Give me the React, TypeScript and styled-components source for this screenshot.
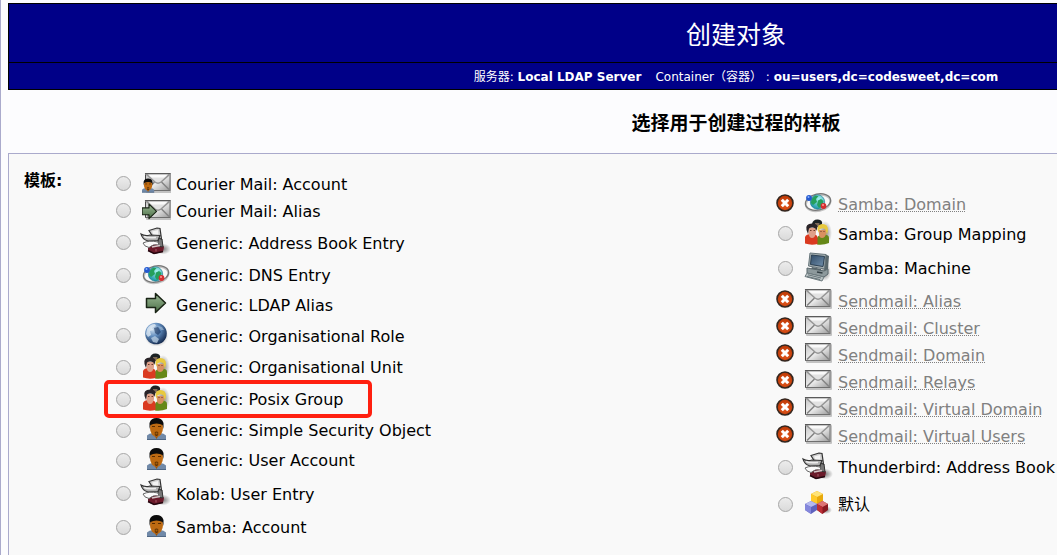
import React from "react";
import styled, { createGlobalStyle, css } from "styled-components";

const GlobalStyle = createGlobalStyle`
  body {
    margin: 0;
    background: #fcfcfe;
    color: #000;
    font-family: "DejaVu Sans", "Noto Sans CJK SC", sans-serif;
    font-size: 16px;
    overflow-x: hidden;
  }
`;

const Page = styled.div`
  box-sizing: border-box;
  min-height: 100vh;
  border-left: 1px solid #aaaacc;
  padding: 3px 0 0 7px;
  overflow: hidden;
`;

const Content = styled.main`
  display: flex;
  flex-direction: column;
  min-width: 1456px;
`;

const Banner = styled.header`
  background: #000088;
  border: 1px solid #000;
  color: #fff;
  text-align: center;
`;

const Title = styled.h1`
  margin: 0;
  padding: 14px 0 8px;
  border-bottom: 1px solid #000;
  font-size: 25px;
  font-weight: 400;
  line-height: 36px;
`;

const ServerLine = styled.p`
  display: flex;
  justify-content: center;
  gap: 14px;
  margin: 0;
  padding-top: 2px;
  font-size: 12px;
  line-height: 24px;
`;

const Subtitle = styled.h2`
  margin: 19px 0 16px;
  font-size: 19px;
  line-height: 28px;
  text-align: center;
`;

const Panel = styled.section`
  display: grid;
  grid-template-columns: 90px 1fr 1fr;
  align-items: center;
  box-sizing: border-box;
  min-height: calc(100vh - 153px);
  align-content: start;
  padding: 16px 25px 12px 15px;
  background: #f9f9f9;
  border: 1px solid #aaaacc;
  border-bottom: 0;
`;

const PanelLabel = styled.div`
  align-self: start;
  font-size: 16px;
  font-weight: 700;
  line-height: 22px;
`;

const TemplateList = styled.ul`
  margin: 0;
  padding: 0;
  list-style: none;
`;

const Row = styled.li<{ $height: number; $marked?: boolean }>`
  position: relative;
  display: flex;
  align-items: center;
  width: fit-content;
  height: ${(p) => p.$height}px;
  white-space: nowrap;
  ${(p) =>
    p.$marked &&
    css`
      &::after {
        content: "";
        position: absolute;
        inset: -3px -29px -3px -10px;
        border: 4px solid #ff2010;
        border-radius: 5px;
        pointer-events: none;
      }
    `}
`;

const Mark = styled.span`
  display: flex;
  align-items: center;
  justify-content: center;
  width: 18px;
  margin-right: 8px;
`;

const Radio = styled.input`
  appearance: none;
  box-sizing: border-box;
  width: 15px;
  height: 15px;
  margin: 0;
  border: 1px solid #a6a6a6;
  border-radius: 50%;
  background: linear-gradient(#ececec, #dadada);
  &:checked {
    background: radial-gradient(#555 30%, #e4e4e4 35%);
  }
`;

const StopMark = styled.svg`
  margin-bottom: 2px;
`;

const IconSlot = styled.span`
  display: flex;
  align-items: center;
  justify-content: center;
  width: 32px;
  margin-right: 4px;
  padding-bottom: 3px;
`;

const Name = styled.label`
  padding-top: 2px;
  line-height: 20px;
`;

const Unavailable = styled.abbr`
  padding-top: 3px;
  color: #808080;
  line-height: 20px;
  text-decoration: underline dotted 1px;
`;

type Kind = "mail" | "mailUser" | "mailAlias" | "book" | "dns" | "arrow" | "role" | "group" | "person" | "machine" | "blocks";

const rowHeight: Record<Kind, number> = {
  mail: 27,
  mailUser: 27,
  mailAlias: 27,
  book: 37,
  dns: 28,
  arrow: 31,
  role: 31,
  group: 32,
  person: 30,
  machine: 37,
  blocks: 37,
};

const Defs = () => (
  <svg width="0" height="0" style={{ display: "block" }} aria-hidden="true">
    <defs>
      <linearGradient id="paper" x1="0" y1="0" x2="1" y2="1">
        <stop offset="0" stopColor="#c4c4c4" />
        <stop offset=".5" stopColor="#ececec" />
        <stop offset="1" stopColor="#9a9a9a" />
      </linearGradient>
      <linearGradient id="leaf" x1="0" y1="0" x2="0" y2="1">
        <stop offset="0" stopColor="#9dba97" />
        <stop offset="1" stopColor="#4b6f47" />
      </linearGradient>
      <radialGradient id="globe" cx=".35" cy=".3" r=".75">
        <stop offset="0" stopColor="#cfe0f0" />
        <stop offset=".45" stopColor="#5f8bbd" />
        <stop offset="1" stopColor="#14294e" />
      </radialGradient>
      <radialGradient id="ocean" cx=".6" cy=".3" r=".7">
        <stop offset="0" stopColor="#a8f4f0" />
        <stop offset="1" stopColor="#1c94a6" />
      </radialGradient>
      <radialGradient id="shade">
        <stop offset="0" stopColor="#000" stopOpacity=".5" />
        <stop offset="1" stopColor="#000" stopOpacity="0" />
      </radialGradient>
      <radialGradient id="stop" cx=".5" cy=".6" r=".5">
        <stop offset="0" stopColor="#e65a20" />
        <stop offset="1" stopColor="#c03c08" />
      </radialGradient>
      <linearGradient id="screen" x1="0" y1="0" x2="1" y2="1">
        <stop offset="0" stopColor="#2f4a66" />
        <stop offset="1" stopColor="#7391ad" />
      </linearGradient>
    </defs>
  </svg>
);

const Envelope = () => (
  <g>
    <rect x="2" y="2" width="26" height="19" rx="1" fill="#000" opacity=".22" />
    <rect x="1.500" y="1.500" width="24.500" height="17" fill="url(#paper)" stroke="#6f6f6f" />
    <path d="M1 1.500H26.500M1.500 1V18" stroke="#484848" fill="none" />
    <path d="M3 17.500 10.500 10M25 17.500 17.500 10" stroke="#858585" strokeWidth="1.600" fill="none" />
    <path d="M2.500 2.500 11 10Q14 12.500 17 10L25.500 2.500Z" fill="#e2e2e2" stroke="#959595" strokeWidth="1.500" />
    <path d="M4 2.500H24L20 5.500H8Z" fill="#fafafa" />
  </g>
);

const Person = () => (
  <g>
    <path d="M0 22V17.500Q2 15 6 15H13Q17 15 19 17.500V22Z" fill="#7089a8" />
    <path d="M0 21.500H19" stroke="#4f6784" />
    <path d="M6 15 9.500 21 13 15Z" fill="#9a5208" />
    <ellipse cx="9.500" cy="10" rx="6.500" ry="8.800" fill="#bd6a12" />
    <path d="M2.500 11V5Q4 0 9.500 0T16.500 5V11L15.500 7Q13 5.500 9.500 5.500T3.500 7Z" fill="#0c0c0c" />
    <path d="M5 8.500H8M11 8.500H14" stroke="#5a2c00" strokeWidth="1.200" />
    <path d="M7.800 17V14Q9.500 12.800 11.200 14V17Q9.500 19 7.800 17Z" fill="#5c2f05" />
    <path d="M8.500 14.500H10.500V16.500H8.500Z" fill="#a4600e" />
  </g>
);

const Arrow = () => (
  <path
    d="M1.500 6.500H10.500V1.500L20.500 11 10.500 20.500V15.500H1.500Z"
    fill="url(#leaf)"
    stroke="#192415"
    strokeWidth="1.500"
    strokeLinejoin="round"
  />
);

const TemplateIcon = ({ kind }: { kind: Kind }) => {
  switch (kind) {
    case "mail":
      return (
        <svg width="28" height="21" viewBox="0 0 28 21">
          <Envelope />
        </svg>
      );
    case "mailUser":
      return (
        <svg width="29" height="21" viewBox="0 0 29 21">
          <g transform="translate(2 0)"><Envelope /></g>
          <g transform="translate(0 6.500) scale(.64)"><Person /></g>
        </svg>
      );
    case "mailAlias":
      return (
        <svg width="29" height="21" viewBox="0 0 29 21">
          <g transform="translate(2 0)"><Envelope /></g>
          <g transform="translate(-1 4) scale(.76)"><Arrow /></g>
        </svg>
      );
    case "book":
      return (
        <svg width="32" height="28" viewBox="0 0 32 28">
          <ellipse cx="23" cy="22" rx="8" ry="5.500" fill="url(#shade)" />
          <path d="M8 21 12 17 21 16 24 20 23 25 14 27 8 24Z" fill="#6b1a2a" />
          <path d="M8 23.500 14 26.500 23 24.500" stroke="#250810" strokeWidth="1.400" fill="none" />
          <path d="M18 10 22 12 23 20 18 19Z" fill="#777" stroke="#333" />
          <path d="M9 3.500 17 1 20 1.500 21.500 12 13 10Z" fill="#cfcfcf" stroke="#333" strokeWidth="1.200" />
          <path d="M12 4.500 18 3 18.500 8 14 9Z" fill="#f4f4f4" />
          <path d="M1 7Q5 9.500 10 8L20 8.500 18 13.500 8 14Q2 12 1 7Z" fill="#b0b0b0" stroke="#333" strokeWidth="1.200" />
          <path d="M4 9.500Q8 11.500 16 10.500" stroke="#ededed" strokeWidth="1.500" fill="none" />
          <path d="M3 16Q9 13 18 15L19 18Q13 16.500 9 20.500Q4 19.500 3 16Z" fill="#fafafa" stroke="#666" />
          <path d="M12 20 20 18.500" stroke="#d5c6c8" strokeWidth="1.300" />
          <path d="M16 22V24.500" stroke="#a65c68" />
        </svg>
      );
    case "dns":
      return (
        <svg width="28" height="22" viewBox="0 0 28 22">
          <g fill="none" transform="rotate(-12 14 11)">
            <ellipse cx="14" cy="12" rx="12.500" ry="8" stroke="#c2c2c2" strokeWidth="2" />
            <ellipse cx="14" cy="11" rx="12.800" ry="8" stroke="#777" strokeWidth="1.200" />
          </g>
          <circle cx="13.500" cy="11" r="7.200" fill="url(#ocean)" stroke="#147286" strokeWidth=".6" />
          <path d="M7.500 8 11 4.700 14.500 5 12 8 13 11 9 14 7 12ZM14 9.500 17 8 19.500 10 18 15 15 17 13 14Z" fill="#25a05c" />
          <circle cx="5" cy="7" r="2.900" fill="#2459ce" />
          <circle cx="4.500" cy="6" r="1" fill="#8db2ff" />
          <circle cx="19.500" cy="15" r="2.900" fill="#d52f31" />
          <circle cx="19" cy="14" r="1" fill="#ff9a94" />
        </svg>
      );
    case "arrow":
      return (
        <svg width="22" height="22" viewBox="0 0 22 22">
          <Arrow />
        </svg>
      );
    case "role":
      return (
        <svg width="24" height="24" viewBox="0 0 24 24">
          <ellipse cx="12.500" cy="14" rx="12" ry="11" fill="url(#shade)" />
          <circle cx="12" cy="11.500" r="10.800" fill="url(#globe)" />
          <path d="M3 7Q6 2 11 2L12 4 8 6 9 8 6 9 7 13 4 15 2 12Z" fill="#e4edf5" opacity=".75" />
          <path d="M14 4 18 5 20 8 17 8Z" fill="#b7cbe0" opacity=".5" />
          <path d="M7 16 11 14 15 17 13 21 9 20Z" fill="#bcd1e5" opacity=".75" />
          <path d="M10 6 14 5 17 10 14 13 11 11Z" fill="#15305c" opacity=".6" />
        </svg>
      );
    case "group":
      return (
        <svg width="28" height="26" viewBox="0 0 28 26">
          <ellipse cx="21" cy="14" rx="7" ry="12" fill="url(#shade)" />
          <path d="M8 5Q9 0 14 .500T18 5L16 8H10Z" fill="#1c2224" />
          <path d="M11 4H15.500L15 8H11Z" fill="#7d6958" />
          <path d="M13 25.500V19Q14 16 18 16 25 15 25 19V24Q19 26.500 13 25.500Z" fill="#668818" />
          <path d="M1 24.500V18Q2 15 7 15 13 15 13.500 18V25Q7 26.500 1 24.500Z" fill="#da3a20" />
          <path d="M15 11H22V15Q21 19 18 19T15 15Z" fill="#d99060" />
          <path d="M13.500 11Q13 5 18.500 5T24 11L23 16 21.500 10.500Q18 8 15 11L15 14Z" fill="#e8c93e" />
          <path d="M4.500 9H12V14Q11 19 8 19T4.500 14Z" fill="#dfa088" />
          <path d="M2.500 11Q1 4.500 8 4.500T13 10L12 12 11.500 9.500Q8 7.500 5 9.500L4 15Z" fill="#2a2428" />
          <path d="M6 11.500H7.500M9.500 11.500H11M16.500 12.500H17.500M19.500 12.500H20.500" stroke="#6a3826" />
        </svg>
      );
    case "person":
      return (
        <svg width="19" height="22" viewBox="0 0 19 22">
          <Person />
        </svg>
      );
    case "machine":
      return (
        <svg width="28" height="30" viewBox="0 0 28 30">
          <ellipse cx="21" cy="20" rx="6" ry="9" fill="url(#shade)" />
          <path d="M21 2 25 4 24 17 20 19Z" fill="#59676c" />
          <path d="M6 1 22 2.500 20.500 17 4.500 14Z" fill="#a6b0b2" stroke="#66747a" />
          <path d="M7.500 3 20.500 4.500 19 14.500 6.500 12.500Z" fill="url(#screen)" stroke="#2c4052" />
          <path d="M8 15 17 17V19L7 17Z" fill="#56646a" />
          <path d="M3 16 20 19 24 17V22L20 25 3 21Z" fill="#8d999c" stroke="#5a686d" />
          <path d="M13 20 18.500 21" stroke="#333f44" strokeWidth="1.300" />
          <path d="M3 21 20 25 18 29 1 24.500Z" fill="#b9c2c3" stroke="#6d7a7e" />
          <path d="M4 22.800 17 26M3 24.500 16 27.500" stroke="#68767b" fill="none" />
        </svg>
      );
    case "blocks":
      return (
        <svg width="28" height="25" viewBox="0 0 28 25">
          <ellipse cx="22" cy="20" rx="6" ry="4" fill="url(#shade)" />
          <path d="M7 4 13 1 19 4V11L13 14 7 11Z" fill="#e8a90c" />
          <path d="M7 4 13 1 19 4 13 7Z" fill="#ffe377" />
          <path d="M7 4 13 7V14L7 11Z" fill="#ffc928" />
          <path d="M1 14 7 11 13 14V20L7 24 1 20Z" fill="#5f62bd" />
          <path d="M1 14 7 11 13 14 7 17Z" fill="#b5b9ef" />
          <path d="M1 14 7 17V24L1 20Z" fill="#8487dc" />
          <path d="M13 14 18.500 11 24 14V20L18.500 24 13 20Z" fill="#8a1921" />
          <path d="M13 14 18.500 11 24 14 18.500 17Z" fill="#df7475" />
          <path d="M13 14 18.500 17V24L13 20Z" fill="#bd2f36" />
        </svg>
      );
  }
};

const StopIcon = () => (
  <StopMark width="18" height="18" viewBox="0 0 18 18">
    <circle cx="9" cy="9" r="8" fill="url(#stop)" stroke="#33261f" strokeWidth="1.600" />
    <path d="M5.800 5.800 12.200 12.200M12.200 5.800 5.800 12.200" stroke="#fff" strokeWidth="3" />
  </StopMark>
);

interface Template {
  name: string;
  kind: Kind;
  disabled?: boolean;
  marked?: boolean;
}

const leftTemplates: Template[] = [
  { name: "Courier Mail: Account", kind: "mailUser" },
  { name: "Courier Mail: Alias", kind: "mailAlias" },
  { name: "Generic: Address Book Entry", kind: "book" },
  { name: "Generic: DNS Entry", kind: "dns" },
  { name: "Generic: LDAP Alias", kind: "arrow" },
  { name: "Generic: Organisational Role", kind: "role" },
  { name: "Generic: Organisational Unit", kind: "group" },
  { name: "Generic: Posix Group", kind: "group", marked: true },
  { name: "Generic: Simple Security Object", kind: "person" },
  { name: "Generic: User Account", kind: "person" },
  { name: "Kolab: User Entry", kind: "book" },
  { name: "Samba: Account", kind: "person" },
];

const rightTemplates: Template[] = [
  { name: "Samba: Domain", kind: "dns", disabled: true },
  { name: "Samba: Group Mapping", kind: "group" },
  { name: "Samba: Machine", kind: "machine" },
  { name: "Sendmail: Alias", kind: "mail", disabled: true },
  { name: "Sendmail: Cluster", kind: "mail", disabled: true },
  { name: "Sendmail: Domain", kind: "mail", disabled: true },
  { name: "Sendmail: Relays", kind: "mail", disabled: true },
  { name: "Sendmail: Virtual Domain", kind: "mail", disabled: true },
  { name: "Sendmail: Virtual Users", kind: "mail", disabled: true },
  { name: "Thunderbird: Address Book Entry", kind: "book" },
  { name: "默认", kind: "blocks" },
];

const Templates = ({ items, prefix }: { items: Template[]; prefix: string }) => (
  <TemplateList>
    {items.map((t, i) => {
      const id = `${prefix}-${i}`;
      return (
        <Row key={id} $height={rowHeight[t.kind]} $marked={t.marked}>
          <Mark>{t.disabled ? <StopIcon /> : <Radio type="radio" name="template" id={id} />}</Mark>
          <IconSlot>
            <TemplateIcon kind={t.kind} />
          </IconSlot>
          {t.disabled ? <Unavailable>{t.name}</Unavailable> : <Name htmlFor={id}>{t.name}</Name>}
        </Row>
      );
    })}
  </TemplateList>
);

export default function App() {
  return (
    <Page>
      <GlobalStyle />
      <Defs />
      <Content>
        <Banner>
          <Title>创建对象</Title>
          <ServerLine>
            <span>
              服务器: <b>Local LDAP Server</b>
            </span>
            <span>
              Container（容器） : <b>ou=users,dc=codesweet,dc=com</b>
            </span>
          </ServerLine>
        </Banner>
        <Subtitle>选择用于创建过程的样板</Subtitle>
        <Panel>
          <PanelLabel>模板:</PanelLabel>
          <Templates items={leftTemplates} prefix="left" />
          <Templates items={rightTemplates} prefix="right" />
        </Panel>
      </Content>
    </Page>
  );
}
